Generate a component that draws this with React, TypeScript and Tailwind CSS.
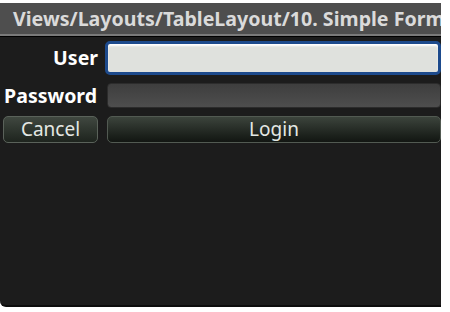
export default function App() {
  return (
    <div className="w-[450px] h-[312px] bg-white overflow-hidden" style={{ fontFamily: '"Noto Sans", "Open Sans", sans-serif' }}>
      <div className="w-[441px] h-[304px] mt-[3px] bg-[#1c1c1c] flex flex-col rounded-bl-[6px] border-b-2 border-[#0c0c0c]">
        <div className="h-[33px] bg-[#4e4e4e] border-b-2 border-[#7a7a7a] flex items-center pl-[13px] overflow-hidden whitespace-nowrap">
          <span className="text-[19.6px] font-bold text-[#dadada] leading-none">Views/Layouts/TableLayout/10. Simple Form</span>
        </div>
        <div className="border-t border-black" />
        <div className="grid grid-cols-[98px_1fr] gap-x-[7px] pt-[4px] items-center">
          <span className="text-right text-[19.5px] font-bold text-white">User</span>
          <div className="h-[34px] rounded-[5px] border-[3px] border-[#1d4a8c] bg-[#dfe1dd] shadow-[inset_0_2px_2px_#ffffff]" />
          <span className="text-right text-[19.5px] font-bold text-white mt-[6px] pr-[1px]">Password</span>
          <div className="h-[25px] mt-[6px] ml-[2px] rounded-[4px] border border-[#2c2c2c] bg-gradient-to-b from-[#3e3e3e] to-[#4e4e4e]" />
          <button className="h-[27px] mt-[6px] ml-[3px] rounded-[5px] border border-[#5a625a] bg-gradient-to-b from-[#404840] to-[#1e241e] text-[19px] leading-none text-[#e4e8e4]">Cancel</button>
          <button className="h-[27px] mt-[6px] ml-[2px] rounded-[5px] border border-[#525a52] bg-gradient-to-b from-[#3c443c] to-[#121612] text-[19px] leading-none text-[#e4e8e4]">Login</button>
        </div>
      </div>
    </div>
  );
}
